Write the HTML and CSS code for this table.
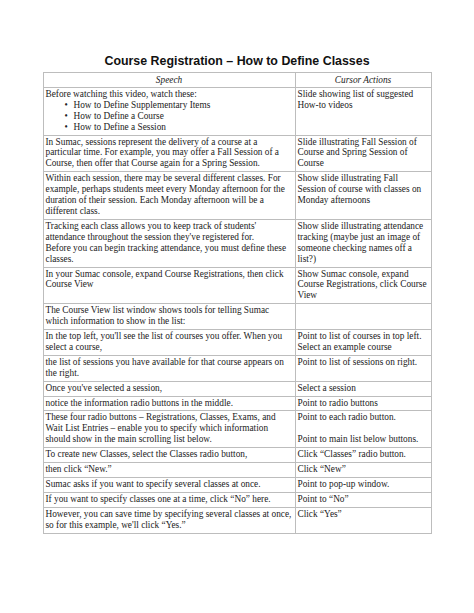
FILE: index.html
```html
<!DOCTYPE html>
<html>
<head>
<meta charset="utf-8">
<link rel="stylesheet" href="styles.css">
</head>
<body>
<div class="page">
  <h1 class="title">Course Registration – How to Define Classes</h1>
  <table class="script">
    <colgroup><col class="col-speech"><col class="col-actions"></colgroup>
    <thead>
      <tr><th>Speech</th><th>Cursor Actions</th></tr>
    </thead>
    <tbody>
      <tr>
        <td>Before watching this video, watch these:
          <ul class="bullets">
            <li>How to Define Supplementary Items</li>
            <li>How to Define a Course</li>
            <li>How to Define a Session</li>
          </ul>
        </td>
        <td>Slide showing list of suggested<br>How-to videos</td>
      </tr>
      <tr>
        <td>In Sumac, sessions represent the delivery of a course at a<br>particular time. For example, you may offer a Fall Session of a<br>Course, then offer that Course again for a Spring Session.</td>
        <td>Slide illustrating Fall Session of<br>Course and Spring Session of<br>Course</td>
      </tr>
      <tr>
        <td>Within each session, there may be several different classes. For<br>example, perhaps students meet every Monday afternoon for the<br>duration of their session. Each Monday afternoon will be a<br>different class.</td>
        <td>Show slide illustrating Fall<br>Session of course with classes on<br>Monday afternoons</td>
      </tr>
      <tr>
        <td>Tracking each class allows you to keep track of students'<br>attendance throughout the session they've registered for.<br>Before you can begin tracking attendance, you must define these<br>classes.</td>
        <td>Show slide illustrating attendance<br>tracking (maybe just an image of<br>someone checking names off a<br>list?)</td>
      </tr>
      <tr>
        <td>In your Sumac console, expand Course Registrations, then click<br>Course View</td>
        <td>Show Sumac console, expand<br>Course Registrations, click Course<br>View</td>
      </tr>
      <tr>
        <td>The Course View list window shows tools for telling Sumac<br>which information to show in the list:</td>
        <td></td>
      </tr>
      <tr>
        <td>In the top left, you'll see the list of courses you offer. When you<br>select a course,</td>
        <td>Point to list of courses in top left.<br>Select an example course</td>
      </tr>
      <tr>
        <td>the list of sessions you have available for that course appears on<br>the right.</td>
        <td>Point to list of sessions on right.</td>
      </tr>
      <tr>
        <td>Once you've selected a session,</td>
        <td>Select a session</td>
      </tr>
      <tr>
        <td>notice the information radio buttons in the middle.</td>
        <td>Point to radio buttons</td>
      </tr>
      <tr>
        <td>These four radio buttons – Registrations, Classes, Exams, and<br>Wait List Entries – enable you to specify which information<br>should show in the main scrolling list below.</td>
        <td>Point to each radio button.<br><br>Point to main list below buttons.</td>
      </tr>
      <tr>
        <td>To create new Classes, select the Classes radio button,</td>
        <td>Click “Classes” radio button.</td>
      </tr>
      <tr>
        <td>then click “New.”</td>
        <td>Click “New”</td>
      </tr>
      <tr>
        <td>Sumac asks if you want to specify several classes at once.</td>
        <td>Point to pop-up window.</td>
      </tr>
      <tr>
        <td>If you want to specify classes one at a time, click “No” here.</td>
        <td>Point to “No”</td>
      </tr>
      <tr>
        <td>However, you can save time by specifying several classes at once,<br>so for this example, we'll click “Yes.”</td>
        <td>Click “Yes”</td>
      </tr>
    </tbody>
  </table>
</div>
</body>
</html>
```

FILE: styles.css
```css
html, body {
  margin: 0;
  padding: 0;
  background: #ffffff;
}

.page {
  padding-top: 54px;
  display: flex;
  flex-direction: column;
  align-items: center;
}

.title {
  margin: 0 0 4px 0;
  font-family: "Liberation Sans", Arial, sans-serif;
  font-weight: bold;
  font-size: 12.4px;
  line-height: 14px;
  color: #111;
  text-align: center;
}

.script {
  width: 388px;
  border-collapse: collapse;
  table-layout: fixed;
  font-family: "Liberation Serif", "Times New Roman", serif;
  font-size: 9.3px;
  line-height: 10.9px;
  color: #222;
}

.col-speech { width: 252px; }
.col-actions { width: 136px; }

.script th,
.script td {
  border: 1px solid #bdbdbd;
  padding: 1px 2px 2px 2px;
  vertical-align: top;
  text-align: left;
  white-space: nowrap;
  overflow: hidden;
}

.script th {
  font-weight: normal;
  font-style: italic;
  text-align: center;
  padding-top: 2px;
  padding-bottom: 1px;
}

.bullets {
  margin: 0;
  padding: 0 0 0 28px;
  list-style: none;
}

.bullets li {
  position: relative;
}

.bullets li::before {
  content: "•";
  position: absolute;
  left: -9px;
  top: 0;
}
```
